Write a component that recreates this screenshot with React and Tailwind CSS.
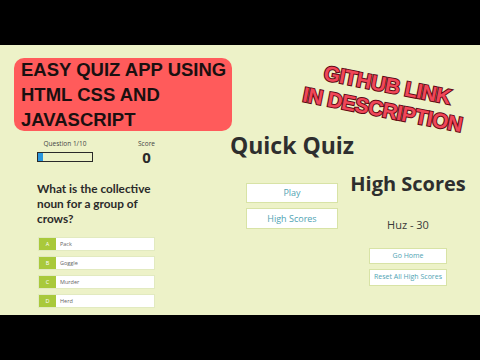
export default function App() {
  const answers = [
    ["A", "Pack"],
    ["B", "Goggle"],
    ["C", "Murder"],
    ["D", "Herd"],
  ];
  return (
    <div className="w-[480px] h-[360px] bg-black flex flex-col overflow-hidden">
      <div className="h-[45px] bg-black" />
      <div className="relative h-[270px] bg-[#edf2c8] flex flex-row font-['Open_Sans',sans-serif]">
        {/* Left column */}
        <div className="ml-[14px] w-[218px] pt-[13px] flex flex-col">
          <div className="h-[73px] rounded-[10px] bg-[#ff5b5b] pl-[7px] font-['Liberation_Sans',Arial,sans-serif] font-bold text-[18.5px] leading-[25px] text-[#1a1010] whitespace-nowrap">
            <div className="-mt-[1px]">EASY QUIZ APP USING</div>
            <div>HTML CSS AND</div>
            <div>JAVASCRIPT</div>
          </div>
          <div className="ml-[23px] w-[118px] flex flex-col">
            <div className="mt-[9px] flex flex-row">
              <div className="w-[56px] flex flex-col items-center">
                <div className="text-[6.5px] leading-[8px] text-[#444] whitespace-nowrap">Question 1/10</div>
                <div className="mt-[4px] w-[56px] h-[10px] border border-[#2a2a2a] bg-transparent">
                  <div className="w-[5px] h-full bg-[#2a97de]" />
                </div>
              </div>
              <div className="ml-[45px] w-[20px] flex flex-col items-center">
                <div className="text-[6.5px] leading-[8px] text-[#444]">Score</div>
                <div className="mt-[2px] text-[15px] leading-[15px] font-bold text-[#2a2a2a]">0</div>
              </div>
            </div>
            <div className="mt-[16px] font-['Lato',sans-serif] text-[11.8px] leading-[15px] font-bold text-[#2a2a2a] whitespace-nowrap">
              <div>What is the collective</div>
              <div>noun for a group of</div>
              <div>crows?</div>
            </div>
            <div className="mt-[11px] flex flex-col gap-[5px] pl-[1px]">
              {answers.map(([l, t]) => (
                <div key={l} className="h-[14px] flex flex-row bg-white border border-[#e2eac0]">
                  <div className="w-[17px] h-full bg-[#a9c93b] flex items-center justify-center text-[5.5px] text-white">{l}</div>
                  <div className="pl-[4px] flex items-center text-[5.5px] text-[#666]">{t}</div>
                </div>
              ))}
            </div>
          </div>
        </div>
        {/* Middle column */}
        <div className="w-[120px] pt-[89px] flex flex-col items-center">
          <div className="text-[23px] leading-none font-bold text-[#2e2e2e] whitespace-nowrap">Quick Quiz</div>
          <div className="mt-[26px] w-[92px] flex flex-col gap-[5px]">
            <div className="h-[20px] bg-white border border-[#d8e3a6] flex items-center justify-center text-[9px] text-[#4fa3b3]">Play</div>
            <div className="h-[21px] bg-white border border-[#d8e3a6] flex items-center justify-center text-[9px] text-[#4fa3b3]">High Scores</div>
          </div>
        </div>
        {/* Right column */}
        <div className="w-[112px] pt-[129px] flex flex-col items-center">
          <div className="text-[20px] leading-none font-bold text-[#2e2e2e] whitespace-nowrap">High Scores</div>
          <div className="mt-[25px] text-[11px] leading-none text-[#3a3a3a] whitespace-nowrap">Huz - 30</div>
          <div className="mt-[18px] w-[78px] flex flex-col gap-[5px]">
            <div className="h-[16px] bg-white border border-[#d8e3a6] flex items-center justify-center text-[7px] text-[#4fa3b3]">Go Home</div>
            <div className="h-[17px] bg-white border border-[#d8e3a6] flex items-center justify-center text-[7px] text-[#4fa3b3] whitespace-nowrap">Reset All High Scores</div>
          </div>
        </div>
        {/* Overlay */}
        <div className="absolute left-[385px] top-[52px] -translate-x-1/2 -translate-y-1/2 rotate-[11deg] text-center whitespace-nowrap font-['Liberation_Sans',Arial,sans-serif] font-bold text-[21px] leading-[25px] tracking-[-0.6px] text-[#f04658] [-webkit-text-stroke:2px_#5c0a14] [paint-order:stroke_fill]">
          <div>GITHUB LINK</div>
          <div>IN DESCRIPTION</div>
        </div>
      </div>
      <div className="h-[45px] bg-black" />
    </div>
  );
}
